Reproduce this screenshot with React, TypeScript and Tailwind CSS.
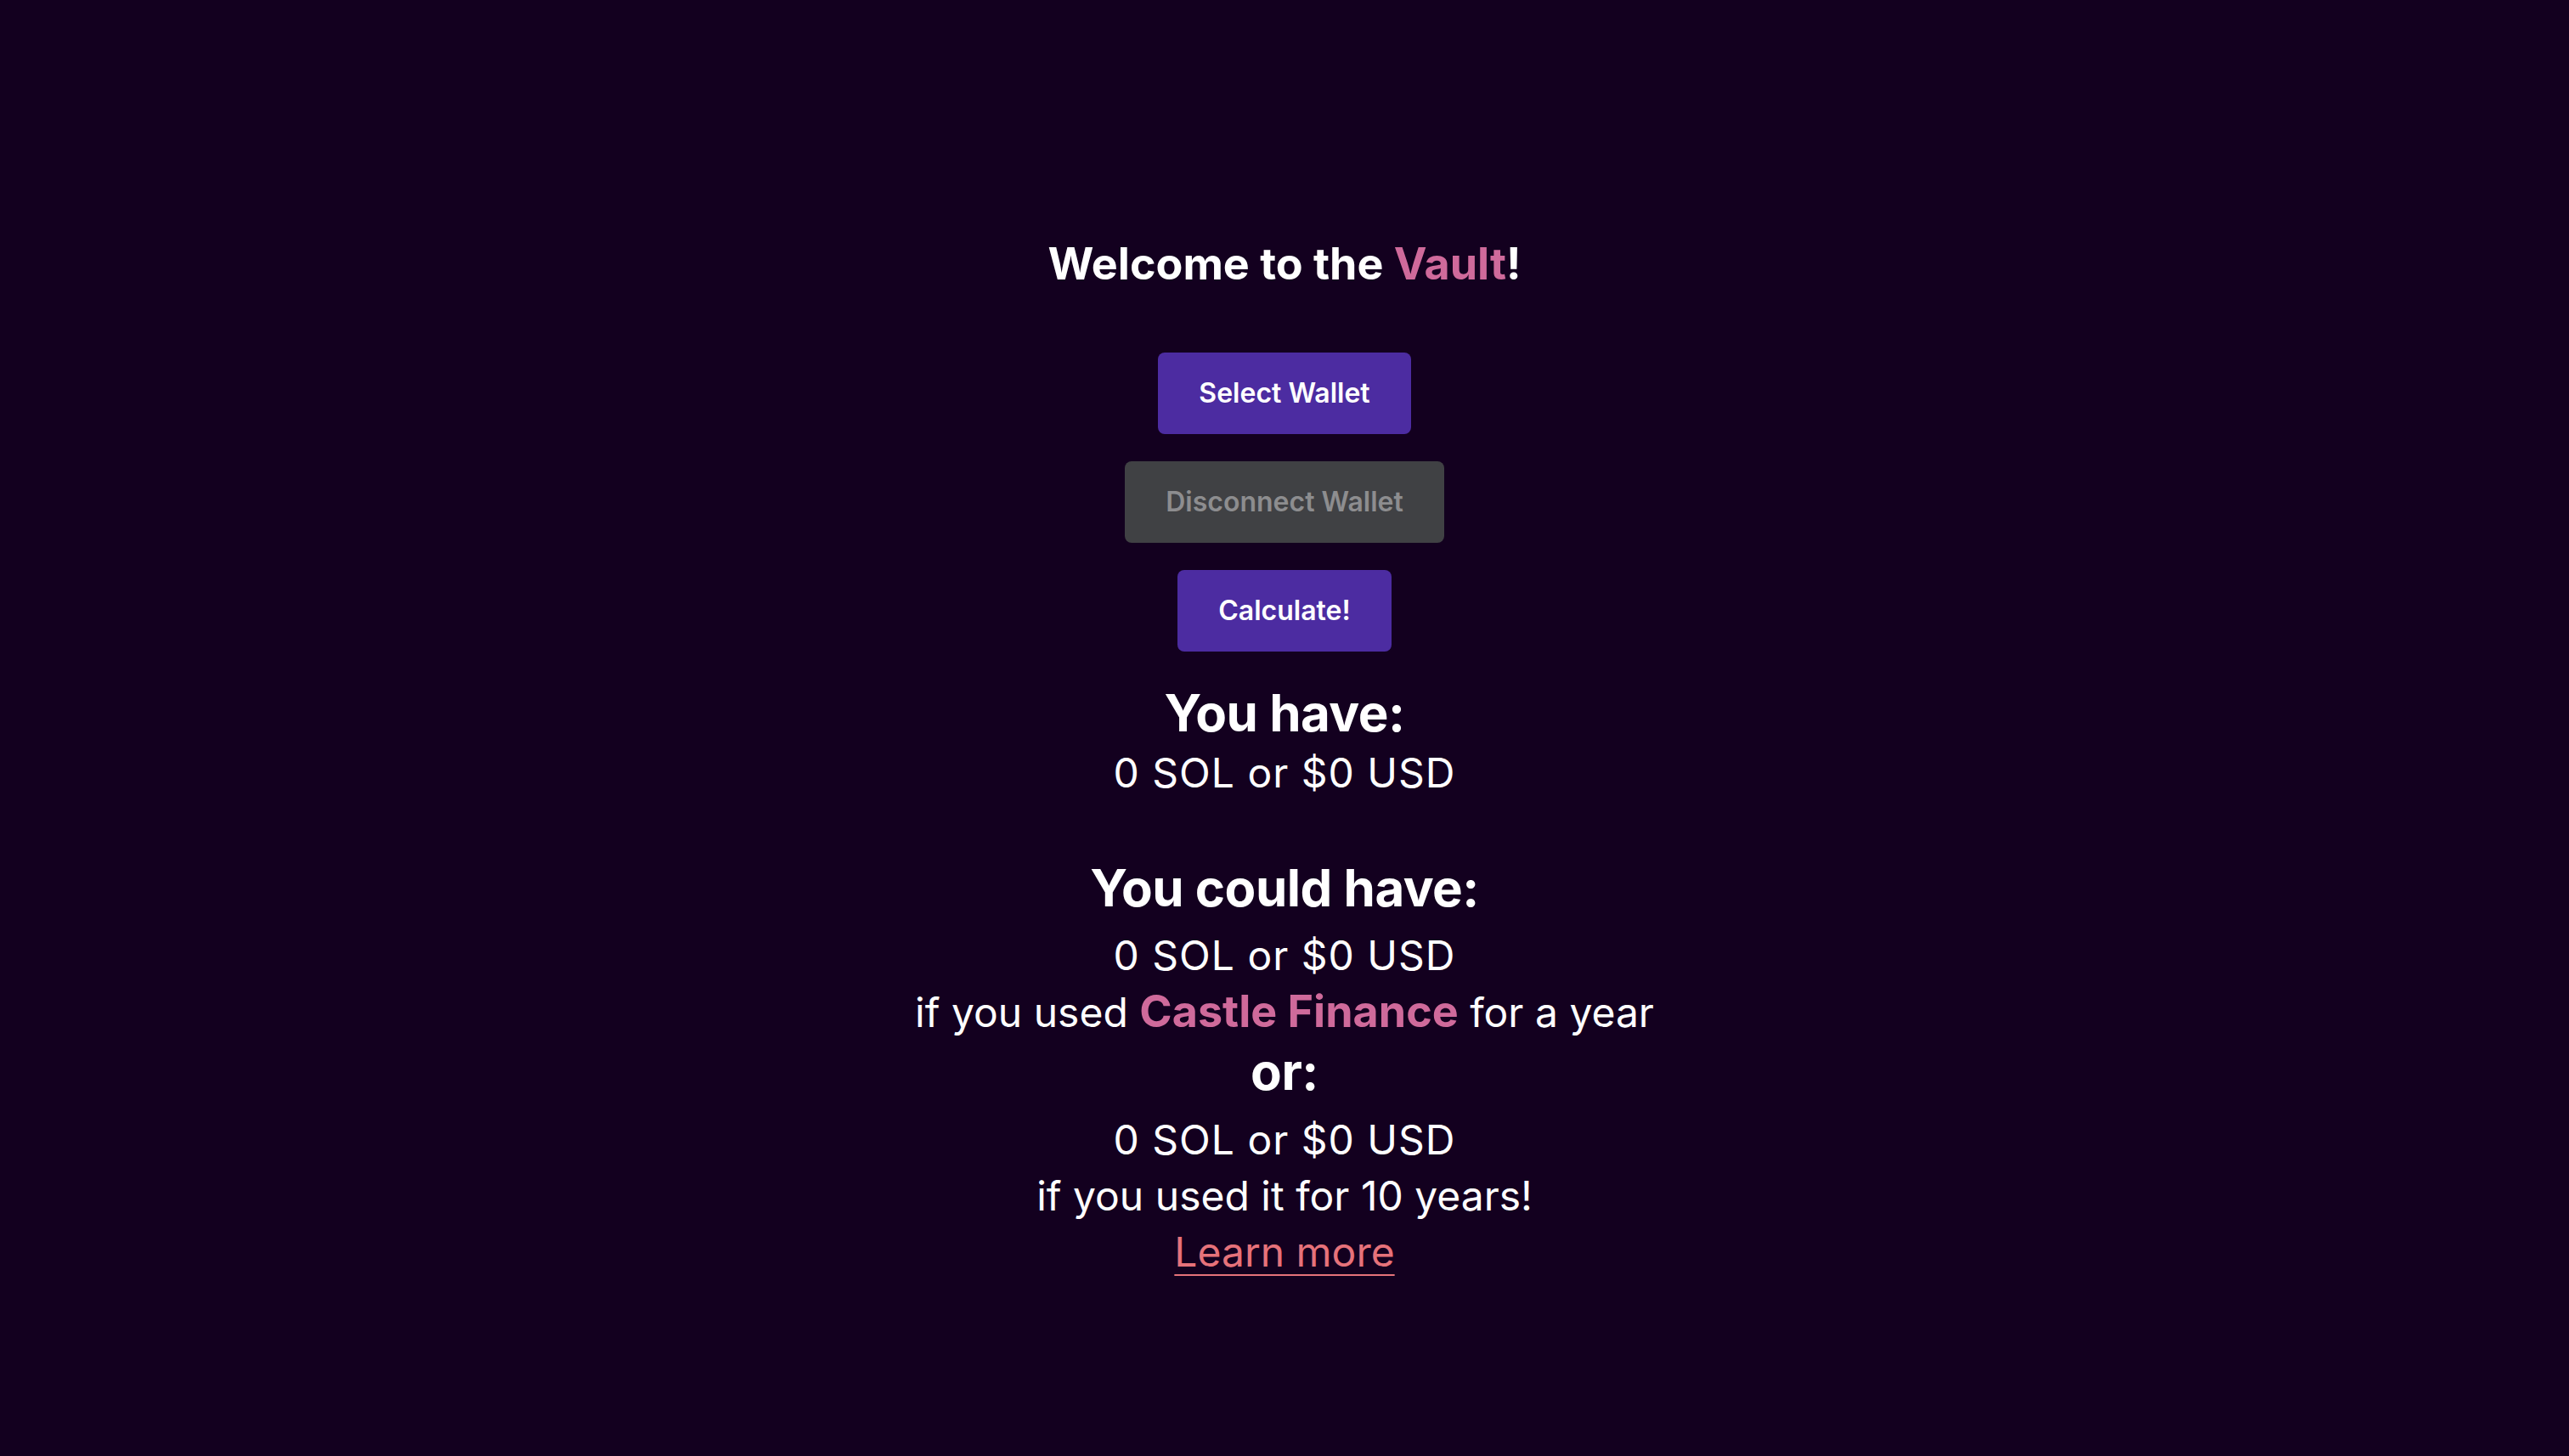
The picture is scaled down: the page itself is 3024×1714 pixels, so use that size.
import React from 'react';

const sans = "font-['Inter','Noto_Sans',sans-serif]";

function WalletButton({ label, disabled }: { label: string; disabled?: boolean }) {
  return (
    <button
      disabled={disabled}
      className={`h-[96px] px-[48px] rounded-[8px] text-[32px] font-semibold leading-none ${
        disabled ? 'bg-[#404144] text-[#8d8d8f]' : 'bg-[#4c2ca1] text-white'
      }`}
    >
      {label}
    </button>
  );
}

function Amount() {
  return <span className="tracking-[1px]">0 SOL or $0 USD</span>;
}

export default function App() {
  return (
    <div className={`min-h-screen bg-[#13001f] text-white ${sans} flex flex-col items-center pt-[279px] pb-[200px] text-center`}>
      <h1 className="text-[52px] leading-[64px] font-bold">
        Welcome to the <span className="text-[#cf6a9b]">Vault</span>!
      </h1>

      <div className="mt-[72px] flex flex-col items-center gap-[32px]">
        <WalletButton label="Select Wallet" />
        <WalletButton label="Disconnect Wallet" disabled />
        <WalletButton label="Calculate!" />
      </div>

      <h2 className="mt-[36px] text-[60px] leading-[72px] font-bold tracking-[-0.5px]">You have:</h2>
      <p className="mt-[2px] text-[48px] leading-[66px]">
        <Amount />
      </p>

      <h2 className="mt-[66px] text-[60px] leading-[72px] font-bold tracking-[-0.5px]">You could have:</h2>
      <p className="mt-[11px] text-[48px] leading-[66px]">
        <Amount />
        <br />
        if you used <b className="text-[52px] font-bold text-[#cf6a9b]">Castle Finance</b> for a year
      </p>

      <h2 className="text-[60px] leading-[72px] font-bold tracking-[-0.5px]">or:</h2>
      <p className="mt-[12px] text-[48px] leading-[66px]">
        <Amount />
        <br />
        if you used it for 10 years!
        <br />
        <a href="#" className="text-[#e6727a] underline decoration-[2px] underline-offset-[9px]">
          Learn more
        </a>
      </p>
    </div>
  );
}
